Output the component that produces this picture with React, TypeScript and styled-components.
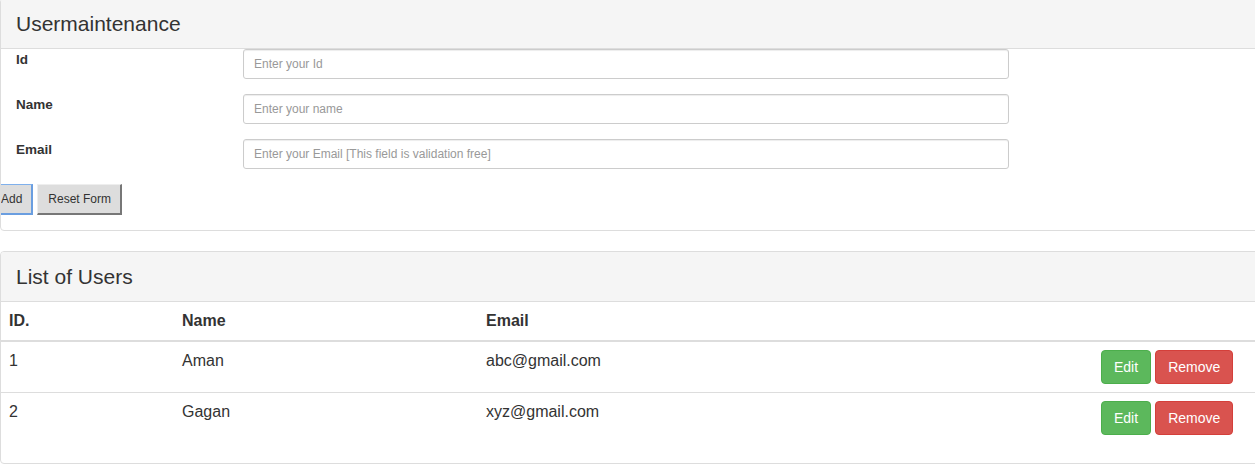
import styled, { createGlobalStyle } from "styled-components";

const GlobalStyle = createGlobalStyle`
  html, body {
    margin: 0;
    padding: 0;
    overflow: hidden;
    background: #fff;
  }
  body {
    font-family: "Liberation Sans", Arial, sans-serif;
    color: #333;
  }
`;

const users = [
  { id: 1, name: "Aman", email: "abc@gmail.com" },
  { id: 2, name: "Gagan", email: "xyz@gmail.com" },
];

const fields = [
  { label: "Id", placeholder: "Enter your Id" },
  { label: "Name", placeholder: "Enter your name" },
  { label: "Email", placeholder: "Enter your Email [This field is validation free]" },
];

const App = () => (
  <>
    <GlobalStyle />
    <Page>
      <Panel>
        <PanelHeading>
          <PanelTitle>Usermaintenance</PanelTitle>
        </PanelHeading>
        <FormBody>
          {fields.map((f) => (
            <FormRow key={f.label}>
              <Label>{f.label}</Label>
              <Input placeholder={f.placeholder} />
            </FormRow>
          ))}
          <ButtonRow>
            <PlainButton $focused>Add</PlainButton>
            <PlainButton>Reset Form</PlainButton>
          </ButtonRow>
        </FormBody>
      </Panel>

      <Panel>
        <PanelHeading>
          <PanelTitle>List of Users</PanelTitle>
        </PanelHeading>
        <Table>
          <colgroup>
            <col style={{ width: 173 }} />
            <col style={{ width: 304 }} />
            <col style={{ width: 615 }} />
            <col />
          </colgroup>
          <thead>
            <tr>
              <Th>ID.</Th>
              <Th>Name</Th>
              <Th>Email</Th>
              <Th />
            </tr>
          </thead>
          <tbody>
            {users.map((u) => (
              <tr key={u.id}>
                <Td>{u.id}</Td>
                <Td>{u.name}</Td>
                <Td>{u.email}</Td>
                <Td>
                  <ActionButton $variant="success">Edit</ActionButton>
                  <ActionButton $variant="danger">Remove</ActionButton>
                </Td>
              </tr>
            ))}
          </tbody>
        </Table>
      </Panel>
    </Page>
  </>
);

const Page = styled.div`
  margin-top: -2px;
  width: 1275px;
`;

const Panel = styled.div`
  border: 1px solid #ddd;
  border-radius: 4px;
  margin-bottom: 20px;
  background: #fff;
  overflow: hidden;
`;

const PanelHeading = styled.div`
  background: #f5f5f5;
  border-bottom: 1px solid #ddd;
  padding: 12px 15px;
`;

const PanelTitle = styled.h3`
  margin: 0;
  font-size: 21px;
  font-weight: normal;
  line-height: 25px;
  color: #333;
`;

const FormBody = styled.div`
  padding: 0 15px 15px 15px;
`;

const FormRow = styled.div`
  display: flex;
  align-items: flex-start;
  margin-bottom: 15px;
`;

const Label = styled.label`
  width: 227px;
  padding-top: 1px;
  font-size: 13.5px;
  font-weight: bold;
  line-height: 20px;
`;

const Input = styled.input`
  box-sizing: border-box;
  width: 766px;
  height: 30px;
  padding: 5px 10px;
  font-family: "Liberation Sans", Arial, sans-serif;
  font-size: 12px;
  color: #555;
  border: 1px solid #ccc;
  border-radius: 3px;
  box-shadow: inset 0 1px 1px rgba(0, 0, 0, 0.075);
  outline: none;

  &::placeholder {
    color: #999;
  }
`;

const ButtonRow = styled.div`
  display: flex;
  gap: 4px;
  margin-top: 15px;
  margin-left: -26px;
`;

const PlainButton = styled.button<{ $focused?: boolean }>`
  box-sizing: border-box;
  height: 31px;
  padding: 0 9px 0 10px;
  font-family: "Liberation Sans", Arial, sans-serif;
  font-size: 12px;
  color: #333;
  background: #ddd;
  border-style: solid;
  border-width: 1px 2px 2px 1px;
  border-color: ${({ $focused }) =>
    $focused ? "#7fb0ec #6a9ee0 #6a9ee0 #7fb0ec" : "#eee #777 #777 #eee"};
`;

const Table = styled.table`
  width: 100%;
  border-collapse: collapse;
  border-spacing: 0;
  margin-bottom: 20px;
  table-layout: fixed;
`;

const Th = styled.th`
  text-align: left;
  padding: 8px;
  font-size: 16px;
  font-weight: bold;
  line-height: 22px;
  border-bottom: 2px solid #ddd;
  vertical-align: bottom;
`;

const Td = styled.td`
  padding: 8px;
  font-size: 16px;
  line-height: 22px;
  border-top: 1px solid #ddd;
  vertical-align: top;
  white-space: nowrap;

  tbody tr:first-child & {
    border-top: none;
  }
`;

const ActionButton = styled.button<{ $variant: "success" | "danger" }>`
  height: 34px;
  padding: 6px 12px;
  margin-right: 4px;
  font-family: "Liberation Sans", Arial, sans-serif;
  font-size: 14px;
  line-height: 20px;
  color: #fff;
  border-radius: 4px;
  border: 1px solid
    ${({ $variant }) => ($variant === "success" ? "#4cae4c" : "#d43f3a")};
  background: ${({ $variant }) =>
    $variant === "success" ? "#5cb85c" : "#d9534f"};
`;

export default App;
